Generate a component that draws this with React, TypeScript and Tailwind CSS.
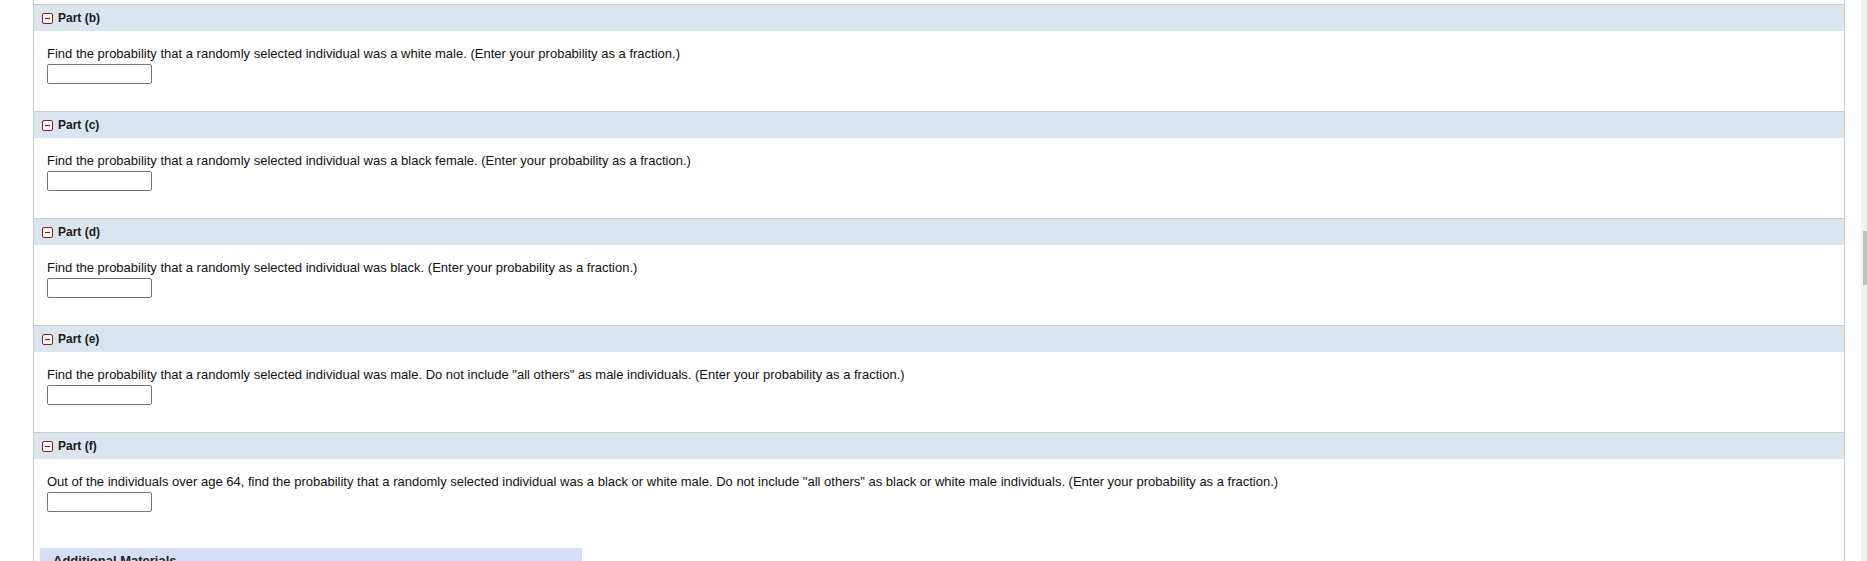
import React from "react";

const parts: { label: string; text: string }[] = [
  {
    label: "Part (b)",
    text: "Find the probability that a randomly selected individual was a white male. (Enter your probability as a fraction.)",
  },
  {
    label: "Part (c)",
    text: "Find the probability that a randomly selected individual was a black female. (Enter your probability as a fraction.)",
  },
  {
    label: "Part (d)",
    text: "Find the probability that a randomly selected individual was black. (Enter your probability as a fraction.)",
  },
  {
    label: "Part (e)",
    text: 'Find the probability that a randomly selected individual was male. Do not include "all others" as male individuals. (Enter your probability as a fraction.)',
  },
  {
    label: "Part (f)",
    text: 'Out of the individuals over age 64, find the probability that a randomly selected individual was a black or white male. Do not include "all others" as black or white male individuals. (Enter your probability as a fraction.)',
  },
];

function CollapseIcon() {
  return (
    <svg width="11" height="11" viewBox="0 0 11 11" className="shrink-0">
      <rect x="0.5" y="0.5" width="10" height="10" rx="1.5" fill="#fff" stroke="#8f1b1b" strokeWidth="1" />
      <line x1="3" y1="5.5" x2="8" y2="5.5" stroke="#8f1b1b" strokeWidth="1.2" />
    </svg>
  );
}

function Section({ label, text, last }: { label: string; text: string; last?: boolean }) {
  return (
    <div className="border-t border-[#cccccc]">
      <div className="h-[26px] bg-[#dae5ef] flex items-center pl-[8px] gap-[5px]">
        <CollapseIcon />
        <span className="text-[12px] font-bold text-[#1a1a1a] leading-[14px]">{label}</span>
      </div>
      <div className={last ? "pl-[13px] pt-[15px] pb-[36px]" : "pl-[13px] pt-[15px] pb-[27px]"}>
        <p className="text-[13px] leading-[15px] text-[#111]">{text}</p>
        <input
          type="text"
          className="block mt-[3px] w-[105px] h-[20px] border border-[#767676] rounded-[2px] bg-white outline-none"
        />
      </div>
    </div>
  );
}

export default function App() {
  return (
    <div
      className="w-[1867px] h-[561px] overflow-hidden bg-white flex"
      style={{ fontFamily: '"Liberation Sans", Arial, sans-serif' }}
    >
      <div className="flex-1 pl-[33px] pr-[16px]">
        <div className="h-full border-l border-r border-[#cccccc] pt-[4px]">
          {parts.map((p, i) => (
            <Section key={p.label} label={p.label} text={p.text} last={i === parts.length - 1} />
          ))}
          <div className="ml-[6px] w-[542px] bg-[#d6def7] pl-[13px] pt-[5px] pb-[6px] text-[13px] leading-[15px] font-bold text-[#222]">
            Additional Materials
          </div>
        </div>
      </div>
      <div className="w-[6px] h-full bg-[#f1f1f1] flex justify-end">
        <div className="w-[4px] h-[54px] mt-[231px] bg-[#c1c1c1]" />
      </div>
    </div>
  );
}
